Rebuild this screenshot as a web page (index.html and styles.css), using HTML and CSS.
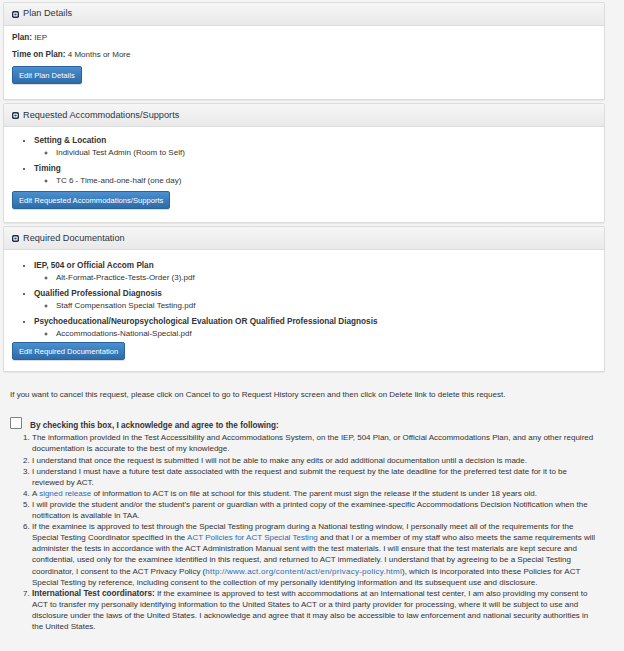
FILE: index.html
```html
<!DOCTYPE html>
<html>
<head>
<meta charset="utf-8">
<link rel="stylesheet" href="styles.css">
</head>
<body>
<div class="page">
  <div class="panel p1">
    <div class="panel-heading">
      <svg class="icon" viewBox="0 0 8 8" width="8" height="8"><rect x="0" y="0" width="8" height="8" rx="2" fill="#1f2c48"/><rect x="1.6" y="1.6" width="4.8" height="4.8" rx="1" fill="#fff"/><rect x="2.8" y="3.1" width="2.4" height="1.8" fill="#1f2c48"/></svg>
      <span>Plan Details</span>
    </div>
    <div class="panel-body">
      <p class="field"><b>Plan:</b> IEP</p>
      <p class="field"><b>Time on Plan:</b> 4 Months or More</p>
      <button class="btn">Edit Plan Details</button>
    </div>
  </div>

  <div class="panel p2">
    <div class="panel-heading">
      <svg class="icon" viewBox="0 0 8 8" width="8" height="8"><rect x="0" y="0" width="8" height="8" rx="2" fill="#1f2c48"/><rect x="1.6" y="1.6" width="4.8" height="4.8" rx="1" fill="#fff"/><rect x="2.8" y="3.1" width="2.4" height="1.8" fill="#1f2c48"/></svg>
      <span>Requested Accommodations/Supports</span>
    </div>
    <div class="panel-body">
      <ul class="items">
        <li><b>Setting &amp; Location</b>
          <ul class="sub"><li>Individual Test Admin (Room to Self)</li></ul>
        </li>
        <li><b>Timing</b>
          <ul class="sub"><li>TC 6 - Time-and-one-half (one day)</li></ul>
        </li>
      </ul>
      <button class="btn">Edit Requested Accommodations/Supports</button>
    </div>
  </div>

  <div class="panel p3">
    <div class="panel-heading">
      <svg class="icon" viewBox="0 0 8 8" width="8" height="8"><rect x="0" y="0" width="8" height="8" rx="2" fill="#1f2c48"/><rect x="1.6" y="1.6" width="4.8" height="4.8" rx="1" fill="#fff"/><rect x="2.8" y="3.1" width="2.4" height="1.8" fill="#1f2c48"/></svg>
      <span>Required Documentation</span>
    </div>
    <div class="panel-body">
      <ul class="items">
        <li><b>IEP, 504 or Official Accom Plan</b>
          <ul class="sub"><li>Alt-Format-Practice-Tests-Order (3).pdf</li></ul>
        </li>
        <li><b>Qualified Professional Diagnosis</b>
          <ul class="sub"><li>Staff Compensation Special Testing.pdf</li></ul>
        </li>
        <li><b>Psychoeducational/Neuropsychological Evaluation OR Qualified Professional Diagnosis</b>
          <ul class="sub"><li>Accommodations-National-Special.pdf</li></ul>
        </li>
      </ul>
      <button class="btn">Edit Required Documentation</button>
    </div>
  </div>

  <p class="cancel">If you want to cancel this request, please click on Cancel to go to Request History screen and then click on Delete link to delete this request.</p>

  <div class="agree">
    <div class="agree-head">
      <span class="checkbox"></span>
      <b>By checking this box, I acknowledge and agree to the following:</b>
    </div>
    <ol class="terms">
      <li>The information provided in the Test Accessibility and Accommodations System, on the IEP, 504 Plan, or Official Accommodations Plan, and any other required documentation is accurate to the best of my knowledge.</li>
      <li>I understand that once the request is submitted I will not be able to make any edits or add additional documentation until a decision is made.</li>
      <li>I understand I must have a future test date associated with the request and submit the request by the late deadline for the preferred test date for it to be reviewed by ACT.</li>
      <li>A <a href="#">signed release</a> of information to ACT is on file at school for this student. The parent must sign the release if the student is under 18 years old.</li>
      <li>I will provide the student and/or the student's parent or guardian with a printed copy of the examinee-specific Accommodations Decision Notification when the notification is available in TAA.</li>
      <li>If the examinee is approved to test through the Special Testing program during a National testing window, I personally meet all of the requirements for the Special Testing Coordinator specified in the <a href="#">ACT Policies for ACT Special Testing</a> and that I or a member of my staff who also meets the same requirements will administer the tests in accordance with the ACT Administration Manual sent with the test materials. I will ensure that the test materials are kept secure and confidential, used only for the examinee identified in this request, and returned to ACT immediately. I understand that by agreeing to be a Special Testing coordinator, I consent to the ACT Privacy Policy (<a href="#" class="url">http://www.act.org/content/act/en/privacy-policy.html</a>), which is incorporated into these Policies for ACT Special Testing by reference, including consent to the collection of my personally identifying information and its subsequent use and disclosure.</li>
      <li><b>International Test coordinators:</b> If the examinee is approved to test with accommodations at an International test center, I am also providing my consent to ACT to transfer my personally identifying information to the United States to ACT or a third party provider for processing, where it will be subject to use and disclosure under the laws of the United States. I acknowledge and agree that it may also be accessible to law enforcement and national security authorities in the United States.</li>
    </ol>
  </div>
</div>
</body>
</html>
```

FILE: styles.css
```css
html, body {
  margin: 0;
  padding: 0;
}
body {
  background: #f4f4f4;
  font-family: "Liberation Sans", Arial, sans-serif;
  font-size: 8px;
  line-height: 11.1px;
  color: #333;
  width: 624px;
  height: 651px;
  overflow: hidden;
}
.page {
  padding: 2px 0 0 3px;
  width: 602px;
}
.panel {
  background: #fff;
  border: 1px solid #dcdcdc;
  border-radius: 2px;
  box-shadow: 0 1px 1px rgba(0,0,0,0.06);
  margin-bottom: 3px;
}
.panel-heading {
  height: 22px;
  display: flex;
  align-items: center;
  gap: 4px;
  padding-left: 8px;
  background: linear-gradient(#f6f6f6, #e9e9e9);
  border-bottom: 1px solid #dcdcdc;
  font-size: 9.2px;
  color: #2b3547;
}
.icon {
  flex: none;
  width: 7px;
  height: 7px;
}
.panel-body {
  padding: 6px 8px 15px 8px;
}
.field {
  margin: 0 0 6px 0;
}
.field b {
  font-size: 8.2px;
}
.btn {
  display: block;
  height: 18px;
  padding: 0 6px;
  font-family: "Liberation Sans", Arial, sans-serif;
  font-size: 7.6px;
  color: #fff;
  background: linear-gradient(#4a8fd0, #2d6ca8);
  border: 1px solid #2a64a0;
  border-radius: 2px;
  box-shadow: 0 1px 1px rgba(0,0,0,0.15);
}
.items {
  margin: 1px 0 5px 0;
  padding-left: 22px;
  list-style: disc;
}
.items > li {
  margin-bottom: 5px;
  line-height: 11.5px;
}
.items > li:last-child {
  margin-bottom: 0;
}
.items b {
  font-size: 8.2px;
}
.sub {
  margin: 0;
  padding-left: 22px;
  list-style: circle;
}
.p2 .panel-body { padding-top: 7px; padding-bottom: 13px; }
.p3 .panel-body { padding-top: 9px; padding-bottom: 11px; }
.p3 .items { margin-bottom: 3px; }
.cancel {
  margin: 17px 0 0 7px;
}
.agree {
  margin: 17px 0 0 7px;
}
.agree-head {
  display: flex;
  align-items: flex-start;
  gap: 8px;
}
.checkbox {
  display: block;
  flex: none;
  width: 12px;
  height: 12px;
  border: 1px solid #808080;
  background: #fff;
  border-radius: 1px;
  box-sizing: border-box;
}
.agree-head b {
  font-size: 8.2px;
  padding-top: 3px;
}
.terms {
  margin: 1px 0 0 0;
  padding-left: 22px;
  padding-right: 4px;
}
.terms b {
  font-size: 8.2px;
}
a {
  color: #2a6db5;
  text-decoration: none;
}
.url {
  letter-spacing: 0.25px;
}
```
